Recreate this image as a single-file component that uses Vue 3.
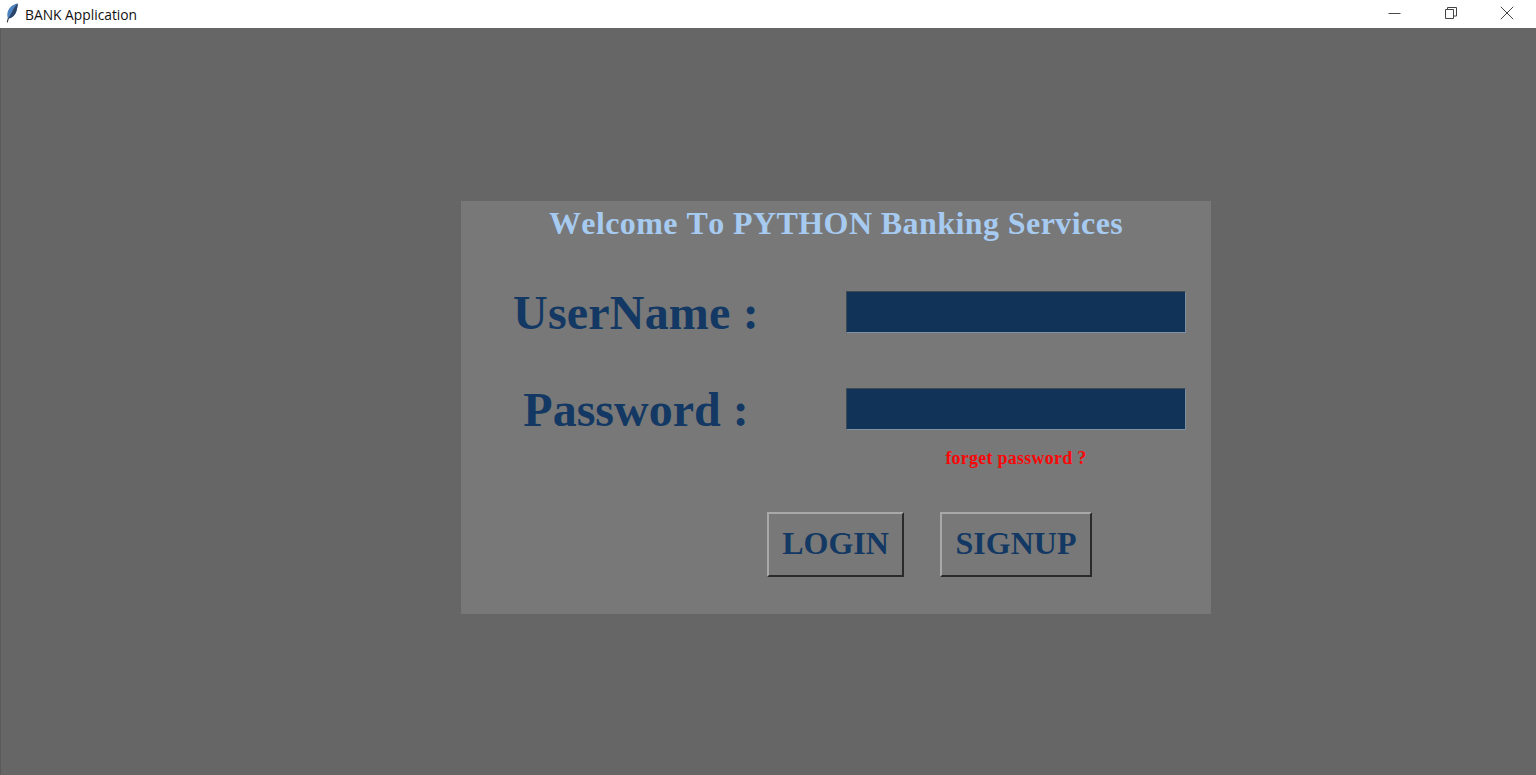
<script setup>
const title = 'BANK Application'
</script>

<template>
  <div class="window">
    <header class="titlebar">
      <div class="app-id">
        <svg class="feather" viewBox="0 0 14 20" width="14" height="20">
          <path d="M12.8 0.6 C8.2 1.2 3.8 4.6 2.6 9.2 C2 11.6 2.3 13.8 3.2 15.6 C6.8 15.2 9.8 12.4 11.1 9 C12.1 6.4 12.6 3.4 12.8 0.6 Z" fill="#4d82c0"/>
          <path d="M12.8 0.6 C10.4 3 8.6 5.6 7.2 8.6 C6 11 4.6 13.2 3.2 15.6 C6.8 15.2 9.8 12.4 11.1 9 C12.1 6.4 12.6 3.4 12.8 0.6 Z" fill="#2b4468"/>
          <path d="M3.4 15 L2.2 19.4" stroke="#30343c" stroke-width="1.1" fill="none"/>
        </svg>
        <span class="app-title">{{ title }}</span>
      </div>
      <div class="controls">
        <span class="ctl">
          <svg viewBox="0 0 14 14" width="14" height="14"><path d="M1.5 7.5 H13.5" stroke="#4a4a4a" stroke-width="1" fill="none"/></svg>
        </span>
        <span class="ctl">
          <svg viewBox="0 0 14 14" width="14" height="14"><path d="M1.5 3.5 H9.5 V12.5 H1.5 Z M3.5 3.5 V1.5 H12.5 V10 H9.5" stroke="#444" stroke-width="1" fill="none"/></svg>
        </span>
        <span class="ctl">
          <svg viewBox="0 0 14 14" width="14" height="14"><path d="M0.8 0.8 L13.2 13.2 M13.2 0.8 L0.8 13.2" stroke="#444" stroke-width="1" fill="none"/></svg>
        </span>
      </div>
    </header>

    <main class="stage">
      <section class="panel">
        <h1 class="welcome">Welcome To PYTHON Banking Services</h1>
        <div class="form">
          <label class="field-label label-user">UserName :</label>
          <div class="entry"></div>
          <label class="field-label">Password :</label>
          <div class="entry"></div>
        </div>
        <div class="forget">forget password ?</div>
        <div class="actions">
          <button class="btn btn-login" type="button">LOGIN</button>
          <button class="btn btn-signup" type="button">SIGNUP</button>
        </div>
      </section>
    </main>
  </div>
</template>

<style scoped>
.window {
  width: 1536px;
  height: 775px;
  display: flex;
  flex-direction: column;
  overflow: hidden;
  font-family: "Liberation Serif", "Times New Roman", serif;
  font-kerning: none;
}
.titlebar {
  height: 28px;
  flex: none;
  background: #fff;
  display: flex;
  justify-content: space-between;
  align-items: center;
}
.app-id {
  display: flex;
  align-items: center;
  padding-left: 5px;
  gap: 6px;
}
.feather { display: block; margin-top: -2px; }
.app-title {
  font: 13.8px/20px "Open Sans", "Liberation Sans", sans-serif;
  color: #111;
  margin-top: 1px;
}
.controls { display: flex; height: 100%; padding-right: 1px; }
.ctl {
  width: 56px;
  display: flex;
  align-items: center;
  justify-content: center;
  padding-bottom: 2px;
  box-sizing: border-box;
}
.ctl:first-child { margin-right: 1px; width: 55px; padding-right: 2px; }
.stage {
  flex: 1;
  background: #666666;
  border-left: 1px solid #5a5a5a;
  padding: 173px 0 0 460px;
}
.panel {
  width: 750px;
  height: 413px;
  box-sizing: border-box;
  background: #787878;
  display: flex;
  flex-direction: column;
}
.welcome {
  margin: 4px 0 0;
  font-size: 32px;
  line-height: 36px;
  font-weight: 700;
  letter-spacing: 0.42px;
  color: #a6caf0;
  text-align: center;
}
.form {
  margin-top: 50px;
  display: grid;
  grid-template-columns: 350px 340px;
  column-gap: 35px;
  row-gap: 55px;
}
.field-label {
  font-size: 48px;
  line-height: 43px;
  height: 42px;
  font-weight: 700;
  color: #133863;
  text-align: center;
}
.label-user { letter-spacing: 0.2px; }
.entry {
  height: 42px;
  box-sizing: border-box;
  background: #113357;
  border: 1px solid;
  border-color: #3f4a55 #7b8c9e #7f93a8 #3f4a55;
}
.forget {
  margin: 17px 0 0 385px;
  width: 340px;
  font-size: 18px;
  line-height: 22px;
  font-weight: 700;
  letter-spacing: 0.25px;
  color: #fa0808;
  text-align: center;
}
.actions {
  margin: 43px 0 0 306px;
  display: flex;
  gap: 36px;
}
.btn {
  height: 65px;
  padding: 0 0 2px;
  box-sizing: border-box;
  background: #787878;
  border: 2px solid;
  border-color: #a8a8a8 #2a2a2a #2a2a2a #a8a8a8;
  font-family: inherit;
  font-size: 32px;
  font-kerning: none;
  font-weight: 700;
  color: #133863;
}
.btn-login { width: 137px; }
.btn-signup { width: 152px; }
</style>
